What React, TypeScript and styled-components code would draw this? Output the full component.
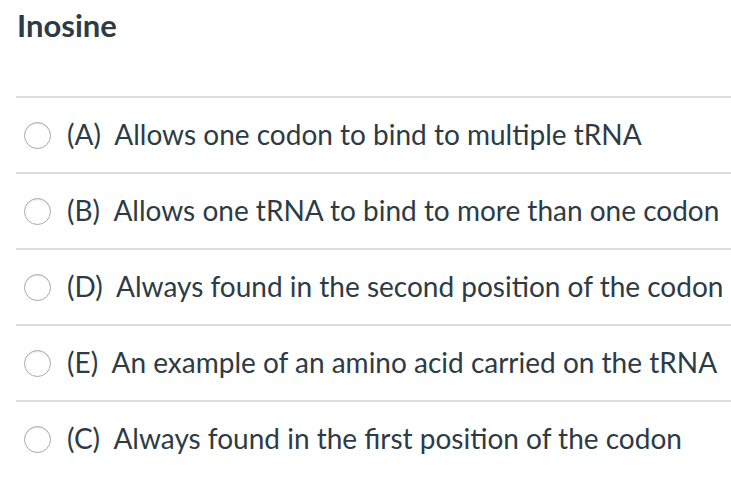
import React from "react";
import styled, { createGlobalStyle } from "styled-components";

const GlobalStyle = createGlobalStyle`
  body {
    margin: 0;
    background: #ffffff;
    font-family: Lato, "Helvetica Neue", Arial, sans-serif;
  }
`;

const Wrapper = styled.section`
  padding: 0 0 0 16px;
  color: #2d3b45;
`;

const Title = styled.h1`
  margin: 0;
  padding: 6px 0 0 1px;
  height: 96px;
  box-sizing: border-box;
  font-size: 31px;
  font-weight: 700;
  line-height: 38px;
  color: #2d3b45;
`;

const AnswerList = styled.div`
  display: flex;
  flex-direction: column;
`;

const Answer = styled.label`
  display: flex;
  align-items: center;
  gap: 16px;
  height: 76px;
  box-sizing: border-box;
  padding: 0 0 2px 8px;
  border-top: 2px solid #dcdcdc;
`;

const Radio = styled.span`
  flex: none;
  width: 27px;
  height: 27px;
  margin-top: 2px;
  border-radius: 50%;
  box-sizing: border-box;
  border: 1.5px solid #a9a9a9;
  background: radial-gradient(circle at 50% 60%, #ffffff 60%, #f1f1f1 100%);
  box-shadow: inset 0 1px 1px rgba(0, 0, 0, 0.08);
`;

const AnswerText = styled.span`
  font-size: 28px;
  line-height: 34px;
  white-space: pre;
  color: #2d3b45;
`;

const answers = [
  "(A)  Allows one codon to bind to multiple tRNA",
  "(B)  Allows one tRNA to bind to more than one codon",
  "(D)  Always found in the second position of the codon",
  "(E)  An example of an amino acid carried on the tRNA",
  "(C)  Always found in the first position of the codon",
];

const App = () => {
  return (
    <Wrapper>
      <GlobalStyle />
      <Title>Inosine</Title>
      <AnswerList>
        {answers.map((text, i) => (
          <Answer key={i}>
            <Radio />
            <AnswerText>{text}</AnswerText>
          </Answer>
        ))}
      </AnswerList>
    </Wrapper>
  );
};

export default App;
